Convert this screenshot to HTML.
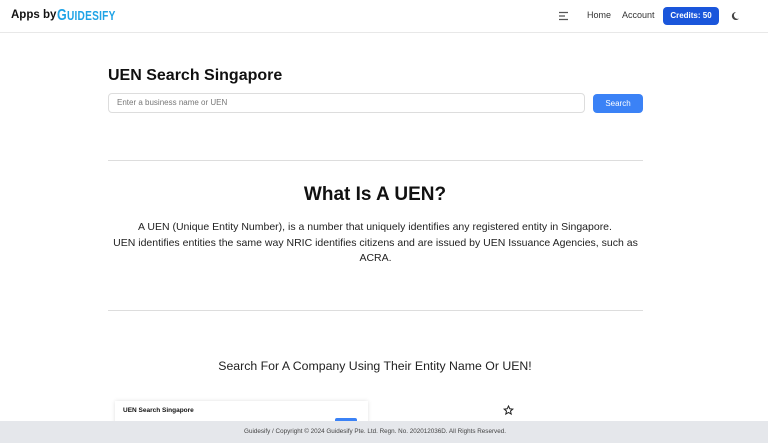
<!DOCTYPE html>
<html><head><meta charset="utf-8"><style>
*{box-sizing:border-box;margin:0;padding:0}
body{width:768px;height:443px;overflow:hidden;background:#fff;font-family:"Liberation Sans",sans-serif;color:#111;position:relative}
.hdr{position:absolute;left:0;top:0;width:768px;height:33px;border-bottom:1px solid #e8e8e8;background:#fff}
.abs{position:absolute;white-space:nowrap}
</style></head><body>
<div class="hdr"></div>
<div class="abs" style="left:11px;top:9px;font-size:11.5px;font-weight:bold;color:#111">Apps by</div>
<div class="abs" style="left:57px;top:7px;font-size:16px;font-weight:bold;color:#1fa3e6;transform:scaleX(0.78);transform-origin:left;letter-spacing:0.3px">G<span style="font-size:13px">UIDESIFY</span></div>
<svg class="abs" style="left:558px;top:11px" width="11" height="10"><path d="M1 1.5h9M1 5h6M1 8.5h9" stroke="#555" stroke-width="1.3"/></svg>
<div class="abs" style="left:587px;top:10px;font-size:9px;color:#333">Home</div>
<div class="abs" style="left:622px;top:10px;font-size:9px;color:#333">Account</div>
<div class="abs" style="left:663px;top:7px;width:56px;height:18px;background:#1a56db;border-radius:4px;color:#fff;font-size:8px;font-weight:bold;text-align:center;line-height:18px">Credits: 50</div>
<svg class="abs" style="left:730px;top:11px" width="10" height="10"><path d="M6 1A4 4 0 1 0 9 7.5 3.3 3.3 0 0 1 6 1z" fill="#444"/></svg>

<div class="abs" style="left:108px;top:67px;font-size:16px;font-weight:bold;color:#111">UEN Search Singapore</div>
<div class="abs" style="left:108px;top:93px;width:477px;height:20px;border:1px solid #ddd;border-radius:4px;font-size:8px;color:#777;padding-left:8px;line-height:18px">Enter a business name or UEN</div>
<div class="abs" style="left:593px;top:94px;width:50px;height:19px;background:#3b82f6;border-radius:4px;color:#fff;font-size:8px;text-align:center;line-height:19px">Search</div>

<div class="abs" style="left:108px;top:160px;width:535px;height:1px;background:#ddd"></div>
<div class="abs" style="left:0;top:184px;width:750px;text-align:center;font-size:19px;font-weight:bold;color:#111">What Is A UEN?</div>
<div class="abs" style="left:0;top:221px;width:750px;text-align:center;font-size:10.5px;color:#222">A UEN (Unique Entity Number), is a number that uniquely identifies any registered entity in Singapore.</div>
<div class="abs" style="left:108px;top:236px;width:535px;text-align:center;font-size:10.5px;color:#222;white-space:normal;line-height:15px">UEN identifies entities the same way NRIC identifies citizens and are issued by UEN Issuance Agencies, such as ACRA.</div>
<div class="abs" style="left:108px;top:310px;width:535px;height:1px;background:#ddd"></div>
<div class="abs" style="left:0;top:359px;width:750px;text-align:center;font-size:12.3px;color:#222">Search For A Company Using Their Entity Name Or UEN!</div>

<div class="abs" style="left:115px;top:401px;width:253px;height:40px;box-shadow:0 0 4px rgba(0,0,0,0.12);background:#fff"></div>
<div class="abs" style="left:123px;top:407px;font-size:6.5px;font-weight:bold;color:#111">UEN Search Singapore</div>
<div class="abs" style="left:335px;top:418px;width:22px;height:5px;background:#3b82f6;border-radius:2px"></div>
<svg class="abs" style="left:503px;top:405px" width="11" height="11"><path d="M5.5 1l1.3 2.8 3 .3-2.3 2 .7 3-2.7-1.6-2.7 1.6.7-3-2.3-2 3-.3z" fill="none" stroke="#222" stroke-width="1"/></svg>

<div class="abs" style="left:0;top:421px;width:768px;height:22px;background:#e5e7eb"></div>
<div class="abs" style="left:0;top:421px;width:750px;text-align:center;font-size:6.3px;color:#444;line-height:22px">Guidesify / Copyright © 2024 Guidesify Pte. Ltd. Regn. No. 202012036D. All Rights Reserved.</div>
</body></html>
